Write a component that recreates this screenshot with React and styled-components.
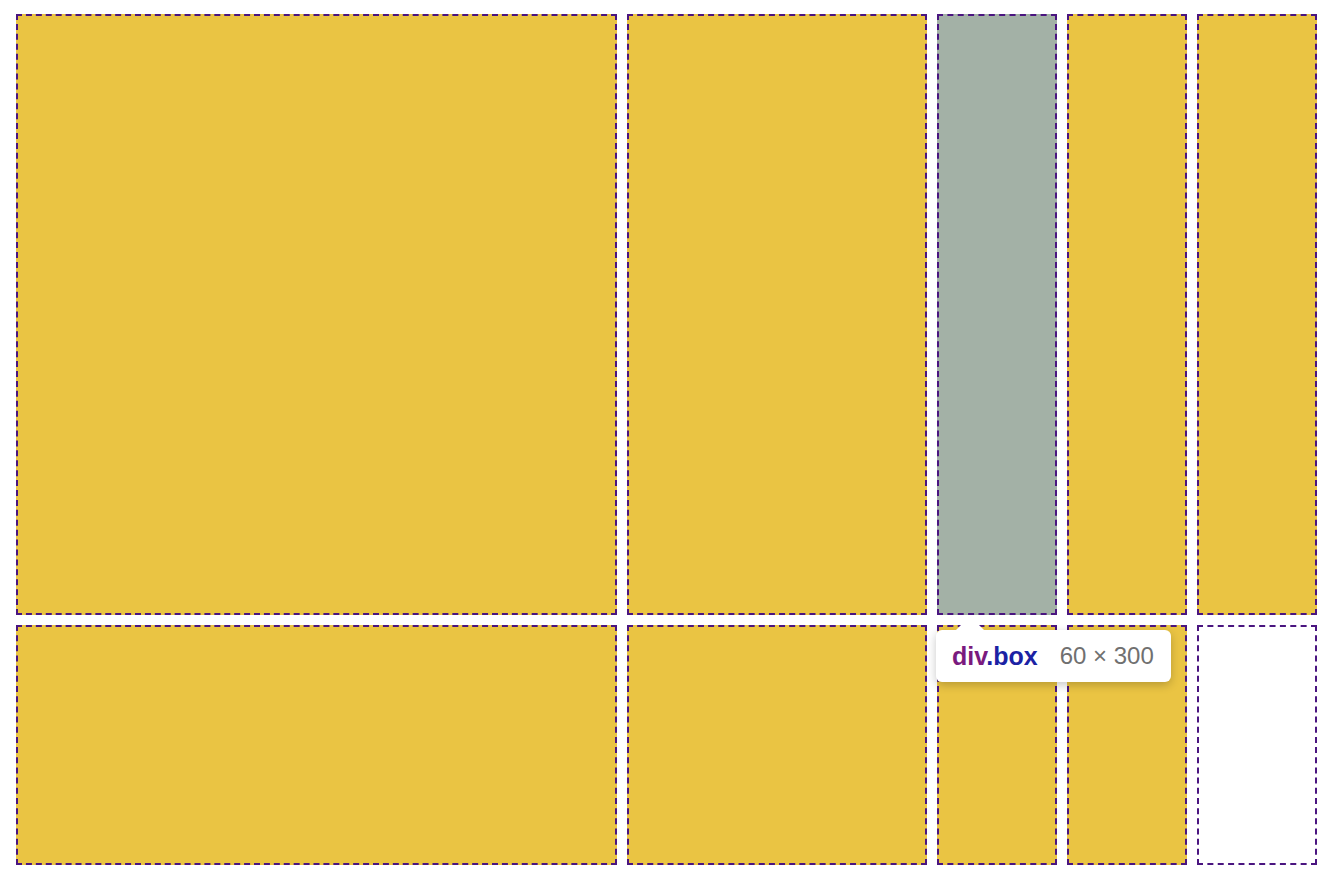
import React from "react";
import styled, { createGlobalStyle } from "styled-components";

const GlobalStyle = createGlobalStyle`
    html, body {
        margin: 0;
        padding: 0;
        background: #ffffff;
        font-family: "Liberation Sans", Arial, sans-serif;
    }
`;

const CELLS = [
    { id: "a" },
    { id: "b" },
    { id: "c", hover: true },
    { id: "d" },
    { id: "e" },
    { id: "f" },
    { id: "g" },
    { id: "h" },
    { id: "i" },
    { id: "j", empty: true },
];

export default function App() {
    return (
        <Page>
            <GlobalStyle />
            <Grid>
                {CELLS.map((cell) => (
                    <Box key={cell.id} $hover={cell.hover} $empty={cell.empty}>
                        {cell.hover && (
                            <Tooltip>
                                <Tag>
                                    <TagName>div</TagName>
                                    <ClassName>.box</ClassName>
                                </Tag>
                                <Size>60 × 300</Size>
                            </Tooltip>
                        )}
                    </Box>
                ))}
            </Grid>
        </Page>
    );
}

const Page = styled.div`
    padding: 14px 16px;
`;

const Grid = styled.div`
    display: grid;
    grid-template-columns: 601px 300px 120px 120px 120px;
    grid-template-rows: 601px 240px;
    gap: 10px;
`;

const Box = styled.div`
    position: relative;
    box-sizing: border-box;
    border: 2px dashed #4a1580;
    background: ${(p) => (p.$empty ? "#ffffff" : p.$hover ? "#a3b1a6" : "#eac443")};
`;

const Tooltip = styled.div`
    position: absolute;
    top: calc(100% + 17px);
    left: -3px;
    z-index: 2;
    display: flex;
    align-items: center;
    gap: 22px;
    height: 52px;
    box-sizing: border-box;
    padding: 0 17px 0 16px;
    background: #ffffff;
    border-radius: 6px;
    box-shadow: 0 3px 10px rgba(0, 0, 0, 0.22);
    white-space: nowrap;
    &::before {
        content: "";
        position: absolute;
        top: -14px;
        left: 19px;
        border-left: 15px solid transparent;
        border-right: 15px solid transparent;
        border-bottom: 15px solid #ffffff;
    }
`;

const Tag = styled.span`
    font-size: 25px;
    font-weight: 700;
`;

const TagName = styled.span`
    color: #7a1a7e;
`;

const ClassName = styled.span`
    color: #1b22a4;
`;

const Size = styled.span`
    font-size: 24px;
    color: #707070;
`;
